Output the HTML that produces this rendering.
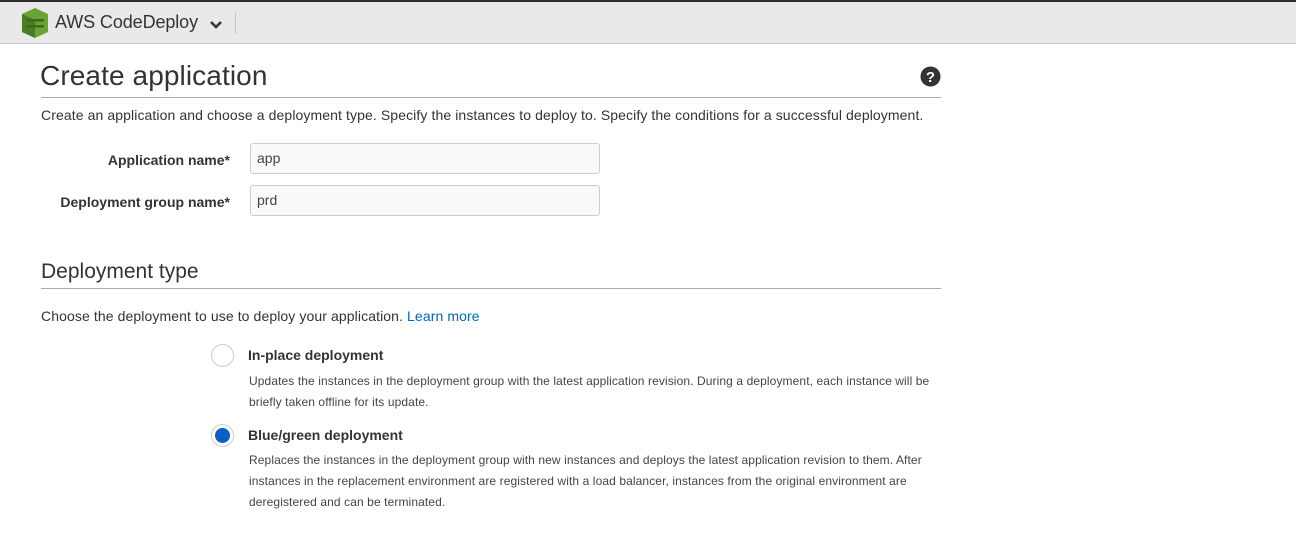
<!DOCTYPE html>
<html><head><meta charset="utf-8"><style>
*{margin:0;padding:0;box-sizing:border-box}
body{width:1296px;height:533px;overflow:hidden;background:#fff;font-family:"Liberation Sans",Arial,sans-serif;color:#333;position:relative}
.hdr{position:absolute;left:0;top:0;width:1296px;height:44px;background:#e9e9e9;border-top:2px solid #2d2d2d;border-bottom:1px solid #c8c8c8}
.abs{position:absolute;white-space:nowrap}
.line{position:absolute;left:41px;width:900px;height:1px;background:#aaa}
.inp{position:absolute;left:250px;width:350px;height:31px;border:1px solid #ccc;border-radius:3px;background:#f9f9f9;font-size:14px;padding:6px 6px;color:#444}
.lbl{position:absolute;right:1066px;font-size:14px;font-weight:bold;color:#333}
.small{font-size:12px;line-height:21px;color:#444;letter-spacing:0.1px}
</style></head><body>
<div class="hdr">
<svg class="abs" style="left:22px;top:6px" width="26" height="30" viewBox="0 0 26 30">
<polygon points="13,0 26,6 26,24 13,30 0,24 0,6" fill="#6aa336"/>
<polygon points="0,6 13,12 13,30 0,24" fill="#4b7c22"/>
<rect x="4" y="11" width="18" height="2.5" fill="#3e6a1a"/><rect x="4" y="17" width="18" height="2.5" fill="#3e6a1a"/>
</svg>
<div class="abs" style="left:55px;top:10px;font-size:18px;color:#333;letter-spacing:-0.1px">AWS CodeDeploy</div>
<svg class="abs" style="left:209px;top:18px" width="14" height="10" viewBox="0 0 14 10"><path d="M2 2 L7 7 L12 2" stroke="#333" stroke-width="2.5" fill="none"/></svg>
<div class="abs" style="left:235px;top:10px;width:1px;height:22px;background:#c4c4c4"></div>
</div>
<div class="abs" style="left:40px;top:60px;font-size:28px;color:#333;letter-spacing:0.1px">Create application</div>
<svg class="abs" style="left:920px;top:66px" width="21" height="21" viewBox="0 0 21 21"><circle cx="10.5" cy="10.5" r="10" fill="#333"/><text x="10.5" y="16" text-anchor="middle" font-family="Liberation Sans" font-weight="bold" font-size="15" fill="#fff">?</text></svg>
<div class="line" style="top:97px"></div>
<div class="abs" style="left:41px;top:107px;font-size:14px;color:#333;letter-spacing:0.1px">Create an application and choose a deployment type. Specify the instances to deploy to. Specify the conditions for a successful deployment.</div>
<div class="lbl" style="top:152px">Application name*</div>
<div class="inp" style="top:143px">app</div>
<div class="lbl" style="top:194px">Deployment group name*</div>
<div class="inp" style="top:185px">prd</div>
<div class="abs" style="left:41px;top:260px;font-size:21px;color:#333">Deployment type</div>
<div class="line" style="top:288px"></div>
<div class="abs" style="left:41px;top:308px;font-size:14px;color:#333;letter-spacing:0.1px">Choose the deployment to use to deploy your application. <span style="color:#0066c0">Learn more</span></div>
<div class="abs" style="left:211px;top:344px;width:23px;height:23px;border:1px solid #ccc;border-radius:50%;background:#fff"></div>
<div class="abs" style="left:248px;top:347px;font-size:14px;font-weight:bold;color:#333">In-place deployment</div>
<div class="abs small" style="left:249px;top:371px">Updates the instances in the deployment group with the latest application revision. During a deployment, each instance will be<br>briefly taken offline for its update.</div>
<div class="abs" style="left:211px;top:424px;width:23px;height:23px;border:1px solid #ccc;border-radius:50%;background:#fff"><div style="position:absolute;left:3px;top:3px;width:15px;height:15px;border-radius:50%;background:#0861c5"></div></div>
<div class="abs" style="left:248px;top:427px;font-size:14px;font-weight:bold;color:#333">Blue/green deployment</div>
<div class="abs small" style="left:249px;top:450px">Replaces the instances in the deployment group with new instances and deploys the latest application revision to them. After<br>instances in the replacement environment are registered with a load balancer, instances from the original environment are<br>deregistered and can be terminated.</div>
</body></html>
